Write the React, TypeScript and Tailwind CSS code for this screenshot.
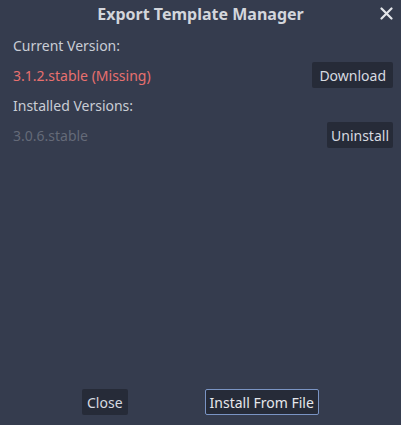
import React from 'react';

const versionsInstalled = ['3.0.6.stable'];

const DarkButton = ({ children, tight }: { children: React.ReactNode; tight?: boolean }) => (
    <button
        className={`h-[26px] rounded-[2px] bg-[#262b38] text-[14px] text-[#d7dae0] ${tight ? 'px-[4px]' : 'px-[7px]'}`}
    >
        {children}
    </button>
);

export default function App() {
    return (
        <div
            className="flex h-[425px] w-[401px] flex-col bg-[#353c4e] text-[14px] text-[#c9cdd5]"
            style={{ fontFamily: '"Noto Sans", "Open Sans", sans-serif' }}
        >
            {/* title bar */}
            <div className="relative flex h-[27px] items-center justify-center">
                <span className="text-[16px] font-bold text-[#d3d6dc]">Export Template Manager</span>
                <svg className="absolute right-[8px] top-[7px]" width="13" height="13" viewBox="0 0 13 13">
                    <path d="M1.5 1.5 L11.5 11.5 M11.5 1.5 L1.5 11.5" stroke="#e4e6ea" strokeWidth="2.2" strokeLinecap="round" />
                </svg>
            </div>

            <div className="flex flex-1 flex-col pl-[13px] pr-[8px] pt-[3px]">
                <div className="flex h-[30px] items-center">Current Version:</div>
                <div className="flex h-[30px] items-center justify-between">
                    <span className="text-[#e8706f]">3.1.2.stable (Missing)</span>
                    <DarkButton>Download</DarkButton>
                </div>
                <div className="flex h-[30px] items-center">Installed Versions:</div>
                {versionsInstalled.map((v) => (
                    <div key={v} className="flex h-[30px] items-center justify-between">
                        <span className="text-[#646a78]">{v}</span>
                        <DarkButton tight>Uninstall</DarkButton>
                    </div>
                ))}
            </div>

            {/* footer buttons */}
            <div className="flex gap-[77px] pb-[10px] pl-[82px]">
                <button className="h-[26px] rounded-[2px] bg-[#262b38] px-[5px] text-[14px] text-[#d7dae0]">Close</button>
                <button className="h-[26px] rounded-[2px] border border-[#7a94c4] bg-[#262b38] px-[4px] text-[14px] text-[#e6e8ec]">
                    Install From File
                </button>
            </div>
        </div>
    );
}
